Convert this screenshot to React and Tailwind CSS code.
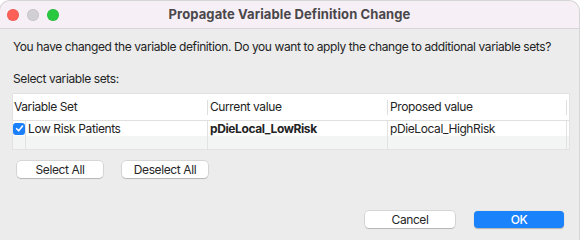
import React from "react";

const font = { fontFamily: "Inter, 'Liberation Sans', sans-serif" };

function Btn({ children, primary, className = "" }) {
  return (
    <div
      className={
        "flex items-center justify-center h-[17px] rounded-[4px] text-[12px] leading-none tracking-[-0.4px] " +
        (primary
          ? "bg-[#1a82fb] text-white shadow-[0_0.5px_1px_rgba(0,0,0,0.25)] "
          : "bg-white text-[#262626] shadow-[0_0_0_0.5px_rgba(0,0,0,0.18),0_1px_1px_rgba(0,0,0,0.15)] ") +
        className
      }
    >
      {children}
    </div>
  );
}

export default function App() {
  return (
    <div className="w-[581px] h-[240px] bg-white overflow-hidden" style={font}>
      <div className="mt-[1px] w-[579px] h-[260px] rounded-t-[10px] bg-[#ececec] overflow-hidden shadow-[0_0_0_1px_#d6d6d6]">
        {/* title bar */}
        <div className="h-[28px] bg-[#f6eff6] border-b border-[#d9d4d9] flex items-center relative">
          <div className="flex items-center gap-[8px] pl-[7px]">
            <span className="w-[12px] h-[12px] rounded-full bg-[#fe5f57] shadow-[inset_0_0_0_0.5px_rgba(0,0,0,0.12)]" />
            <span className="w-[12px] h-[12px] rounded-full bg-[#d1cfd3] shadow-[inset_0_0_0_0.5px_rgba(0,0,0,0.1)]" />
            <span className="w-[12px] h-[12px] rounded-full bg-[#28c840] shadow-[inset_0_0_0_0.5px_rgba(0,0,0,0.12)]" />
          </div>
          <div className="absolute inset-0 flex items-center justify-center text-[13px] font-bold text-[#4a474a] tracking-[0.1px]">
            Propagate Variable Definition Change
          </div>
        </div>
        {/* body */}
        <div className="px-[13px] text-[12px] tracking-[-0.4px] text-[#232323]">
          <p className="mt-[10px] leading-[16px] whitespace-nowrap">
            You have changed the variable definition. Do you want to apply the change to additional variable sets?
          </p>
          <p className="mt-[16px] leading-[16px]">Select variable sets:</p>
          <div className="mt-[6px] -ml-[1px] w-[558px] bg-white border border-[#e2e2e2]">
            {/* header */}
            <div className="h-[27px] flex items-center border-b border-[#e0e0e0]">
              <div className="w-[194px] pl-[1px] flex items-center">Variable Set</div>
              <div className="w-[1px] h-[15px] bg-[#dedede]" />
              <div className="w-[179px] pl-[2px]">Current value</div>
              <div className="w-[1px] h-[15px] bg-[#dedede]" />
              <div className="w-[178px] pl-[2px]">Proposed value</div>
              <div className="w-[1px] h-[15px] bg-[#dedede]" />
            </div>
            {/* row 1 */}
            <div className="h-[15px] flex items-stretch">
              <div className="w-[13px] flex items-center justify-center border-r border-[#e2e2e2]">
                <span className="w-[12px] h-[12px] rounded-[3px] bg-[#1a7ffb] flex items-center justify-center">
                  <svg width="9" height="9" viewBox="0 0 10 10">
                    <path d="M1.8 5.2 L4.1 7.6 L8.4 2.2" fill="none" stroke="white" strokeWidth="1.7" strokeLinecap="round" strokeLinejoin="round" />
                  </svg>
                </span>
              </div>
              <div className="w-[181px] pl-[2px] flex items-center">Low Risk Patients</div>
              <div className="w-[1px] bg-[#e2e2e2]" />
              <div className="w-[179px] pl-[2px] flex items-center font-bold">pDieLocal_LowRisk</div>
              <div className="w-[1px] bg-[#e2e2e2]" />
              <div className="w-[178px] pl-[2px] flex items-center">pDieLocal_HighRisk</div>
              <div className="w-[1px] bg-[#e2e2e2]" />
            </div>
            {/* row 2 */}
            <div className="h-[13px] flex items-stretch bg-[#f3f4f4]">
              <div className="w-[13px] border-r border-[#e2e2e2]" />
              <div className="w-[181px]" />
              <div className="w-[1px] bg-[#e2e2e2]" />
              <div className="w-[179px]" />
              <div className="w-[1px] bg-[#e2e2e2]" />
              <div className="w-[178px]" />
              <div className="w-[1px] bg-[#e2e2e2]" />
            </div>
          </div>
          <div className="mt-[11px] ml-[4px] flex gap-[19px]">
            <Btn className="w-[86px]">Select All</Btn>
            <Btn className="w-[86px]">Deselect All</Btn>
          </div>
          <div className="mt-[33px] flex justify-end gap-[19px] pr-[2px]">
            <Btn className="w-[90px]">Cancel</Btn>
            <Btn primary className="w-[90px] font-medium">OK</Btn>
          </div>
        </div>
      </div>
    </div>
  );
}
